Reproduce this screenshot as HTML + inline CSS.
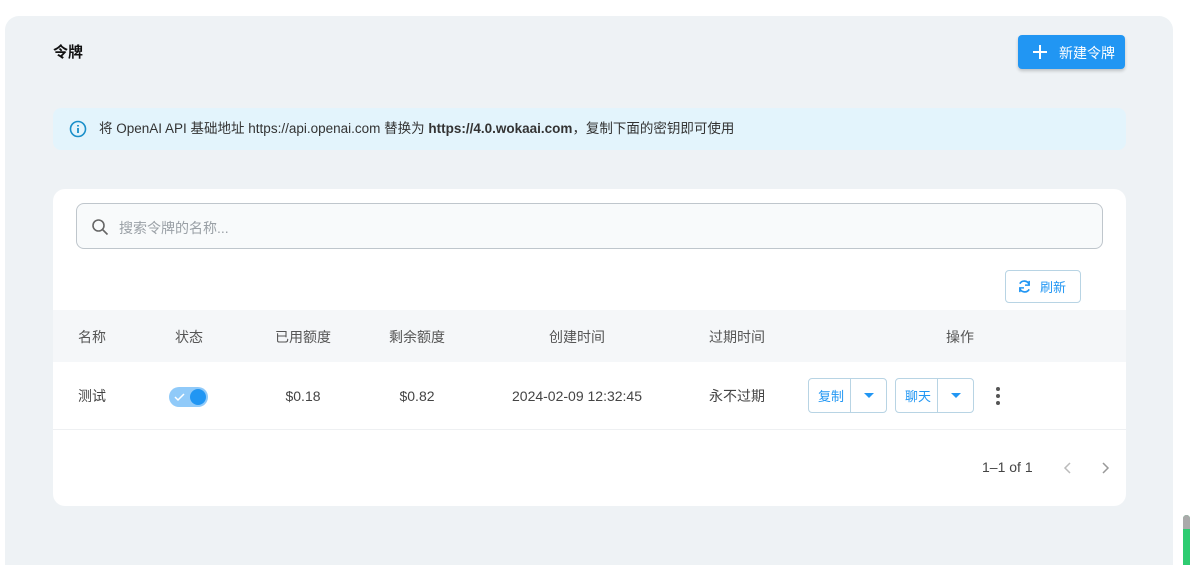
<!DOCTYPE html>
<html style="width:1192px;height:565px;overflow:hidden"><head><meta charset="utf-8"><style>
*{box-sizing:border-box;margin:0;padding:0}
body{width:1192px;height:565px;background:#fff;font-family:"Liberation Sans","Noto Sans CJK SC",sans-serif;position:relative;overflow:hidden;color:#333}
.panel{position:absolute;left:5px;top:16px;width:1168px;height:549px;background:#eef2f5;border-radius:14px 14px 0 0}
.abs{position:absolute}
.title{left:53px;top:41px;font-size:15px;font-weight:bold;color:#111}
.newbtn{left:1018px;top:35px;width:107px;height:34px;background:#2196f3;border-radius:4px;color:#fff;font-size:14px;box-shadow:0 2px 3px rgba(0,0,0,.2)}
.info{left:53px;top:108px;width:1073px;height:42px;background:#e3f4fc;border-radius:8px;font-size:13.5px;color:#333;line-height:42px;padding-left:46px}
.card{left:53px;top:189px;width:1073px;height:317px;background:#fff;border-radius:12px;overflow:hidden}
.search{left:23px;top:14px;width:1027px;height:46px;border:1px solid #bfc6cc;border-radius:8px;background:#f8fafb}
.search span{position:absolute;left:42px;top:14px;font-size:14px;color:#9aa0a6}
.refresh{left:952px;top:81px;width:76px;height:33px;border:1px solid #b8d4e4;border-radius:4px;font-size:13px;color:#2196f3}
.thead{left:0;top:121px;width:1073px;height:52px;background:#f5f7f9}
.cell{position:absolute;font-size:14px;color:#555;transform:translateX(-50%);white-space:nowrap}
.row{left:0;top:173px;width:1073px;height:68px;border-bottom:1px solid #eef0f2}
.sb{position:absolute;height:35px;top:16px;border:1px solid #b8d4e4;border-radius:4px;font-size:13px;color:#2196f3}
</style></head><body>
<div class="panel"></div>
<div class="abs title">令牌</div>
<div class="abs newbtn"><svg class="abs" style="left:14px;top:9px" width="16" height="16"><path d="M8 1v14M1 8h14" stroke="#fff" stroke-width="2"/></svg><span class="abs" style="left:41px;top:8px">新建令牌</span></div>
<div class="abs info"><svg class="abs" style="left:16px;top:12px" width="18" height="18"><circle cx="9" cy="9" r="7.5" fill="none" stroke="#1a8fc9" stroke-width="1.6"/><path d="M9 8v5M9 5v1.5" stroke="#1a8fc9" stroke-width="1.8"/></svg>将 OpenAI API 基础地址 https://api.openai.com 替换为 <b>https://4.0.wokaai.com</b>，复制下面的密钥即可使用</div>
<div class="abs card">
 <div class="abs search"><svg class="abs" style="left:14px;top:14px" width="18" height="18"><circle cx="7.5" cy="7.5" r="5.5" fill="none" stroke="#666" stroke-width="1.6"/><path d="M11.5 11.5l5 5" stroke="#666" stroke-width="1.6"/></svg><span>搜索令牌的名称...</span></div>
 <div class="abs refresh"><svg class="abs" style="left:11px;top:8px" width="15" height="15" viewBox="0 0 16 16"><path d="M13 6A5.5 5.5 0 0 0 3 5M3 10a5.5 5.5 0 0 0 10 1" fill="none" stroke="#2196f3" stroke-width="1.8"/><path d="M13 2v4.5H8.5M3 14V9.5h4.5" fill="none" stroke="#2196f3" stroke-width="1.6"/></svg><span class="abs" style="left:34px;top:6px">刷新</span></div>
 <div class="abs thead">
  <div class="cell" style="left:39px;top:17px">名称</div>
  <div class="cell" style="left:136px;top:17px">状态</div>
  <div class="cell" style="left:250px;top:17px">已用额度</div>
  <div class="cell" style="left:364px;top:17px">剩余额度</div>
  <div class="cell" style="left:524px;top:17px">创建时间</div>
  <div class="cell" style="left:684px;top:17px">过期时间</div>
  <div class="cell" style="left:907px;top:17px">操作</div>
 </div>
 <div class="abs row">
  <div class="cell" style="left:39px;top:24px;color:#444">测试</div>
  <div class="abs" style="left:116px;top:25px;width:39px;height:20px;border-radius:10px;background:#90caf9"><svg class="abs" style="left:5px;top:5px" width="11" height="10"><path d="M1 5l3 3 6-6" fill="none" stroke="#fff" stroke-width="1.5"/></svg><div class="abs" style="left:21px;top:2px;width:16px;height:16px;border-radius:50%;background:#2196f3"></div></div>
  <div class="cell" style="left:250px;top:26px;color:#444">$0.18</div>
  <div class="cell" style="left:364px;top:26px;color:#444">$0.82</div>
  <div class="cell" style="left:524px;top:26px;color:#444">2024-02-09 12:32:45</div>
  <div class="cell" style="left:684px;top:24px;color:#444">永不过期</div>
  <div class="sb" style="left:755px;width:79px"><span class="abs" style="left:9px;top:7px">复制</span><div class="abs" style="left:41px;top:0;width:1px;height:33px;background:#b8d4e4"></div><svg class="abs" style="left:55px;top:14px" width="10" height="6"><path d="M0 0h10L5 5z" fill="#2196f3"/></svg></div>
  <div class="sb" style="left:842px;width:79px"><span class="abs" style="left:9px;top:7px">聊天</span><div class="abs" style="left:41px;top:0;width:1px;height:33px;background:#b8d4e4"></div><svg class="abs" style="left:55px;top:14px" width="10" height="6"><path d="M0 0h10L5 5z" fill="#2196f3"/></svg></div>
  <svg class="abs" style="left:942px;top:24px" width="6" height="20"><circle cx="3" cy="3" r="2" fill="#555"/><circle cx="3" cy="10" r="2" fill="#555"/><circle cx="3" cy="17" r="2" fill="#555"/></svg>
 </div>
 <div class="abs" style="left:929px;top:270px;font-size:14px;color:#444">1–1 of 1</div>
 <svg class="abs" style="left:1010px;top:272px" width="10" height="14"><path d="M7 2L2 7l5 5" fill="none" stroke="#bbb" stroke-width="1.5"/></svg>
 <svg class="abs" style="left:1047px;top:272px" width="10" height="14"><path d="M3 2l5 5-5 5" fill="none" stroke="#999" stroke-width="1.5"/></svg>
</div>
<div class="abs" style="left:1183px;top:515px;width:7px;height:50px;border-radius:4px 4px 0 0;background:#2ecc71"></div>
<div class="abs" style="left:1183px;top:515px;width:7px;height:14px;border-radius:4px 4px 0 0;background:#aaa"></div>
</body></html>
